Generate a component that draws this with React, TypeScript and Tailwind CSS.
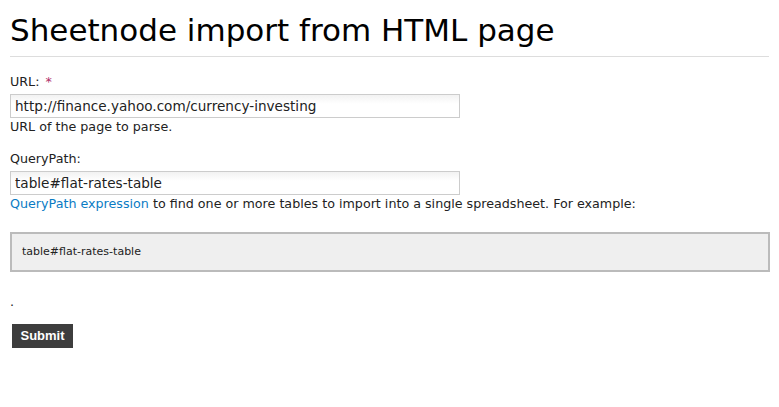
export default function App() {
  return (
    <div className="min-h-screen bg-white px-[10px] text-[12.7px] text-[#222] font-['DejaVu_Sans',Verdana,sans-serif]">
      <h1 className="pt-[12px] pb-[8px] text-[31px] leading-[36px] font-normal text-black border-b border-[#ddd]">
        Sheetnode import from HTML page
      </h1>

      <form onSubmit={(e) => e.preventDefault()}>
        <div className="mt-[16px]">
          <label htmlFor="url" className="block leading-[18px] mb-[3px]">
            URL: <span className="text-[#b0306a] ml-[2px]">*</span>
          </label>
          <input
            id="url"
            type="text"
            defaultValue="http://finance.yahoo.com/currency-investing"
            className="block w-[450px] h-[24px] px-[4px] border border-[#ccc] bg-gradient-to-b from-[#f2f2f2] to-white to-[40%] outline-none text-[13.6px] text-[#222]"
          />
          <div className="leading-[18px]">URL of the page to parse.</div>
        </div>

        <div className="mt-[14px]">
          <label htmlFor="qp" className="block leading-[18px] mb-[3px]">
            QueryPath:
          </label>
          <input
            id="qp"
            type="text"
            defaultValue="table#flat-rates-table"
            className="block w-[450px] h-[24px] px-[4px] border border-[#ccc] bg-gradient-to-b from-[#f2f2f2] to-white to-[40%] outline-none text-[13.6px] text-[#222]"
          />
          <div className="leading-[18px]">
            <a href="#" className="text-[#0a7bc4]">
              QueryPath expression
            </a>{" "}
            to find one or more tables to import into a single spreadsheet. For example:
          </div>
        </div>

        <pre className="mt-[19px] w-[760px] h-[40px] flex items-center px-[10px] bg-[#efefef] border-2 border-[#bbb] text-[11px] text-[#222] font-['DejaVu_Sans',Verdana,sans-serif]">
          table#flat-rates-table
        </pre>

        <p className="mt-[21px] leading-[18px]">.</p>

        <button
          type="submit"
          className="mt-[13px] ml-[2px] h-[24px] w-[61px] bg-[#3d3d3d] text-white font-bold text-[13px] font-['Liberation_Sans',Arial,sans-serif]"
        >
          Submit
        </button>
      </form>
    </div>
  )
}
